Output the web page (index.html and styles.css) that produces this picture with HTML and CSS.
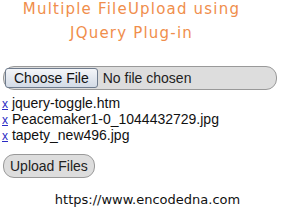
FILE: index.html
```html
<!DOCTYPE html>
<html lang="en">
<head>
    <meta charset="UTF-8">
    <meta name="viewport" content="width=device-width, initial-scale=1.0">
    <title>Multiple FileUpload using JQuery Plug-in</title>
    <link rel="stylesheet" href="styles.css">
</head>
<body>
    <div class="page">
        <h2 class="title">Multiple FileUpload using<br>JQuery Plug-in</h2>

        <form class="upload-form" action="#" method="POST">
            <div class="file-box">
                <span class="file-btn">Choose File</span>
                <span class="file-name">No file chosen</span>
            </div>

            <!-- list of the selected files -->
            <div class="file-list">
                <div class="file-row"><a href="#">x</a> jquery-toggle.htm</div>
                <div class="file-row"><a href="#">x</a> Peacemaker1-0_1044432729.jpg</div>
                <div class="file-row"><a href="#">x</a> tapety_new496.jpg</div>
            </div>

            <button type="submit">Upload Files</button>
        </form>

        <p class="site">https://www.encodedna.com</p>
    </div>
</body>
</html>
```

FILE: styles.css
```css
* {
    box-sizing: border-box;
}
body {
    margin: 0;
    font-family: "Liberation Sans", Arial, sans-serif;
    background: #fff;
}
.page {
    width: 281px;
    padding: 0 4px 0 3px;
}
.title {
    margin: -3px 0 0;
    padding-right: 17px;
    text-align: center;
    font-family: "DejaVu Sans", sans-serif;
    font-weight: normal;
    font-size: 15px;
    line-height: 24px;
    color: #f08e4c;
    letter-spacing: 1.2px;
}
.upload-form {
    margin: 21px 0 0;
}
.file-box {
    display: flex;
    align-items: center;
    height: 24px;
    padding: 1px;
    background: #ddd;
    border: 1px solid #999;
    border-radius: 11px;
    font-size: 14px;
}
.file-btn {
    display: inline-block;
    padding: 0 8px;
    height: 20px;
    line-height: 18px;
    background: linear-gradient(#f4f6f9, #d3dbe6);
    border: 1px solid #6f7c8e;
    border-radius: 3px;
    color: #111;
}
.file-name {
    margin-left: 5px;
    color: #222;
}
.file-list {
    margin: 6px 0 0 -1px;
    font-size: 14px;
    line-height: 15px;
    color: #111;
}
.file-row a {
    color: #2a2ac4;
    font-size: 12px;
}
button {
    margin-top: 10px;
    padding: 2px 6px;
    height: 24px;
    background-color: #ddd;
    border: 1px solid #999;
    border-radius: 11px;
    font-family: "Liberation Sans", Arial, sans-serif;
    font-size: 14px;
    color: #222;
}
.site {
    margin: 14px 0 0 15px;
    text-align: center;
    font-family: "DejaVu Sans", Verdana, sans-serif;
    font-size: 13px;
    color: #111;
}
```
